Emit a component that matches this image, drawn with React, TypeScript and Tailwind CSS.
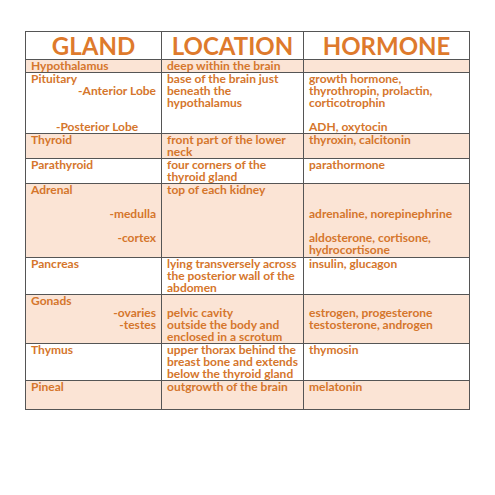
type Line = { t: string; r?: boolean; indent?: boolean };
type Row = { h: number; shade: boolean; cells: Line[][] };

const L = (t: string): Line => ({ t });
const R = (t: string): Line => ({ t, r: true });
const B: Line = { t: "" };

const rows: Row[] = [
  { h: 13, shade: true, cells: [[L("Hypothalamus")], [L("deep within the brain")], []] },
  {
    h: 61,
    shade: false,
    cells: [
      [L("Pituitary"), R("-Anterior Lobe"), B, B, { t: "-Posterior Lobe", indent: true }],
      [L("base of the brain just"), L("beneath the"), L("hypothalamus")],
      [L("growth hormone,"), L("thyrothropin, prolactin,"), L("corticotrophin"), B, L("ADH, oxytocin")],
    ],
  },
  { h: 25, shade: true, cells: [[L("Thyroid")], [L("front part of the lower"), L("neck")], [L("thyroxin, calcitonin")]] },
  { h: 25, shade: false, cells: [[L("Parathyroid")], [L("four corners of the"), L("thyroid gland")], [L("parathormone")]] },
  {
    h: 74,
    shade: true,
    cells: [
      [L("Adrenal"), B, R("-medulla"), B, R("-cortex")],
      [L("top of each kidney")],
      [B, B, L("adrenaline, norepinephrine"), B, L("aldosterone, cortisone,"), L("hydrocortisone")],
    ],
  },
  {
    h: 37,
    shade: false,
    cells: [
      [L("Pancreas")],
      [L("lying transversely across"), L("the posterior wall of the"), L("abdomen")],
      [L("insulin, glucagon")],
    ],
  },
  {
    h: 49,
    shade: true,
    cells: [
      [L("Gonads"), R("-ovaries"), R("-testes")],
      [B, L("pelvic cavity"), L("outside the body and"), L("enclosed in a scrotum")],
      [B, L("estrogen, progesterone"), L("testosterone, androgen")],
    ],
  },
  {
    h: 36,
    shade: false,
    cells: [
      [L("Thymus")],
      [L("upper thorax behind the"), L("breast bone and extends"), L("below the thyroid gland")],
      [L("thymosin")],
    ],
  },
  { h: 29, shade: true, cells: [[L("Pineal")], [L("outgrowth of the brain")], [L("melatonin")]] },
];

function Cell({ lines, w }: { lines: Line[]; w: string }) {
  return (
    <td className={`${w} border border-[#555555] px-[5px] align-top`}>
      {lines.map((l, i) => (
        <div
          key={i}
          className={`whitespace-nowrap ${l.r ? "text-right" : l.indent ? "pl-[25px]" : ""}`}
        >
          {l.t || "\u00a0"}
        </div>
      ))}
    </td>
  );
}

export default function App() {
  return (
    <div className="h-[495px] w-[495px] bg-white pl-[25px] pt-[31px]">
      <table
        className="w-[444px] table-fixed border-collapse border border-[#555555] text-[12px] font-bold leading-[12px] text-[#d5762c]"
        style={{ fontFamily: "Lato, 'Open Sans', sans-serif" }}
      >
        <colgroup>
          <col className="w-[136px]" />
          <col className="w-[142px]" />
          <col className="w-[166px]" />
        </colgroup>
        <thead>
          <tr className="h-[28px]">
            {["GLAND", "LOCATION", "HORMONE"].map((h) => (
              <th
                key={h}
                className="border border-[#555555] text-center align-middle text-[24px] leading-[24px] font-bold text-[#de7a2c]"
              >
                {h}
              </th>
            ))}
          </tr>
        </thead>
        <tbody>
          {rows.map((row, i) => (
            <tr
              key={i}
              className={row.shade ? "bg-[#fbe4d5]" : "bg-white"}
              style={{ height: row.h }}
            >
              <Cell lines={row.cells[0]} w="w-[136px]" />
              <Cell lines={row.cells[1]} w="w-[142px]" />
              <Cell lines={row.cells[2]} w="w-[166px]" />
            </tr>
          ))}
        </tbody>
      </table>
    </div>
  );
}
